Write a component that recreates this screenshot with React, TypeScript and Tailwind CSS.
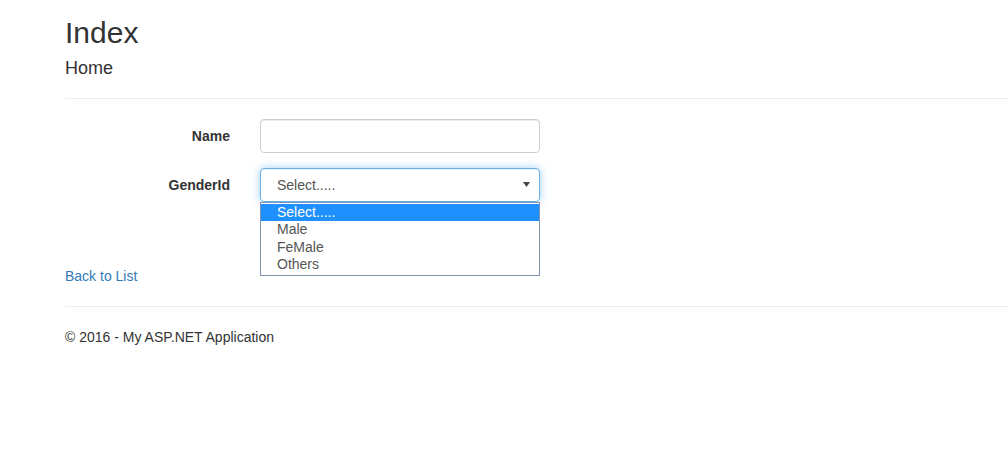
import React from 'react'

const options = ['Select.....', 'Male', 'FeMale', 'Others']

export default function App() {
  return (
    <div className="min-h-screen w-full overflow-hidden bg-white font-['Liberation_Sans',Arial,sans-serif] text-[14px] leading-[20px] text-[#333]">
      <div className="ml-[50px] w-[1170px] px-[15px] pt-[16px]">
        <h2 className="text-[30px] leading-[33px] font-normal">Index</h2>
        <h4 className="mt-[10px] text-[18px] leading-[19.8px] font-normal">Home</h4>
        <hr className="mt-[19px] mb-[20px] border-t border-[#eee]" />

        <form className="flex flex-col">
          <div className="-mx-[15px] mb-[15px] flex">
            <label className="w-[195px] px-[15px] pt-[7px] text-right font-bold">Name</label>
            <div className="flex-1 px-[15px]">
              <input
                type="text"
                className="block h-[34px] w-full max-w-[280px] rounded-[4px] border border-[#ccc] px-[12px] py-[6px] text-[#555] shadow-[inset_0_1px_1px_rgba(0,0,0,0.075)] outline-none"
              />
            </div>
          </div>

          <div className="-mx-[15px] mb-[15px] flex">
            <label className="w-[195px] px-[15px] pt-[7px] text-right font-bold">GenderId</label>
            <div className="flex-1 px-[15px]">
              <div className="relative w-[280px]">
                <div className="flex h-[34px] w-full items-center justify-between rounded-[4px] border border-[#66afe9] pl-[16px] pr-[8px] text-[#555] shadow-[inset_0_1px_1px_rgba(0,0,0,0.075),0_0_8px_rgba(102,175,233,0.6)]">
                  <span>Select.....</span>
                  <svg width="7" height="5" viewBox="0 0 7 5" className="mr-[1px]">
                    <path d="M0 0h7L3.5 5z" fill="#444" />
                  </svg>
                </div>
                <ul className="absolute left-0 top-full z-10 w-full border border-[#8094b8] bg-white pt-[1px] pb-[1px] text-[#555]">
                  {options.map((o, i) => (
                    <li
                      key={o}
                      className={
                        i === 0
                          ? 'h-[17.5px] bg-[#1e90ff] pl-[16px] leading-[17.5px] text-white'
                          : 'h-[17.5px] pl-[16px] leading-[17.5px]'
                      }
                    >
                      {o}
                    </li>
                  ))}
                </ul>
              </div>
            </div>
          </div>

          {/* submit row, hidden under the open list */}
          <div className="-mx-[15px] mb-[15px] flex">
            <div className="ml-[195px] h-[34px] px-[15px]" />
          </div>
        </form>

        <div>
          <a href="#" className="text-[#337ab7]">
            Back to List
          </a>
        </div>

        <hr className="mt-[20px] mb-[20px] border-t border-[#eee]" />
        <footer>
          <p>© 2016 - My ASP.NET Application</p>
        </footer>
      </div>
    </div>
  )
}
